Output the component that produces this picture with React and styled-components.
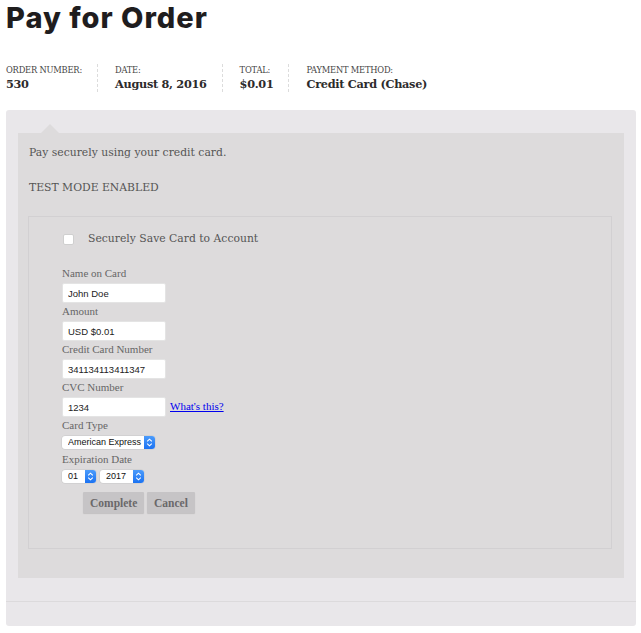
import styled, { createGlobalStyle } from 'styled-components'

const Global = createGlobalStyle`
  html, body {
    margin: 0;
    padding: 0;
    background: #ffffff;
  }
  * { box-sizing: border-box; }
`;

const Page = styled.div`
  padding: 0 5px 7px 6px;
  font-family: "DejaVu Serif", "Liberation Serif", serif;
  color: #555;
`;

const Title = styled.h1`
  margin: 0;
  padding-top: 1px;
  font-family: Inter, "Open Sans", sans-serif;
  font-weight: 800;
  font-size: 29px;
  line-height: 34px;
  letter-spacing: 1px;
  color: #1f1d1e;
`;

const Details = styled.ul`
  list-style: none;
  margin: 29px 0 0;
  padding: 0;
  display: flex;
`;

const Detail = styled.li`
  padding-right: 15px;
  margin-right: 17px;
  border-right: 1px dashed ${p => (p.last ? 'transparent' : '#dcdcdc')};
  display: flex;
  flex-direction: column;
`;

const DetailLabel = styled.span`
  font-size: 8.3px;
  line-height: 12px;
  letter-spacing: -0.2px;
  text-transform: uppercase;
  color: #444;
`;

const DetailValue = styled.strong`
  font-size: 11.3px;
  line-height: 16px;
  letter-spacing: -0.3px;
  font-weight: 700;
  color: #2d2b2c;
`;

const Checkout = styled.div`
  margin-top: 18px;
  background: #e9e7ea;
  border-radius: 3px;
  padding: 23px 12px 0;
`;

const PaymentBox = styled.div`
  position: relative;
  background: #dddbdc;
  padding: 11px 12px 29px 10px;

  &::before {
    content: '';
    position: absolute;
    top: -9px;
    left: 23px;
    border-left: 9px solid transparent;
    border-right: 9px solid transparent;
    border-bottom: 9px solid #dddbdc;
  }
`;

const Note = styled.p`
  margin: ${p => (p.first ? '0' : '17px')} 0 0 1px;
  font-size: 10.8px;
  line-height: 18px;
  color: #555;
`;

const Fieldset = styled.fieldset`
  margin: 19px 0 0;
  border: 1px solid #d2d0d2;
  padding: 14px 0 35px 33px;
  min-width: 0;
`;

const SaveRow = styled.label`
  display: flex;
  align-items: center;
  gap: 14px;
  font-size: 10.8px;
  line-height: 16px;
  color: #555;
`;

const Check = styled.input`
  appearance: none;
  margin: 0 0 0 1px;
  width: 11px;
  height: 11px;
  background: #fff;
  border: 1px solid #cfcfcf;
  border-radius: 2px;
`;

const Form = styled.div`
  margin-top: 18px;
  display: flex;
  flex-direction: column;
  align-items: flex-start;
  font-family: "Liberation Serif", "Times New Roman", serif;
`;

const Label = styled.label`
  font-size: 11px;
  line-height: 16px;
  color: #666;
  margin-top: ${p => p.gap || 0}px;
`;

const FieldRow = styled.div`
  margin-top: 2px;
  display: flex;
  align-items: center;
  gap: 4px;
`;

const Input = styled.input`
  width: 104px;
  height: 20px;
  margin: 0;
  border: 1px solid #e4e4e4;
  border-radius: 2px;
  background: #fff;
  padding: 0 5px;
  font-family: "Liberation Sans", Arial, sans-serif;
  font-size: 9.5px;
  color: #222;
  outline: none;
`;

const Help = styled.a`
  font-size: 11px;
  color: #0000ee;
  text-decoration: underline;
  margin-top: -2px;
`;

const SelectRow = styled.div`
  margin-top: ${p => p.gap || 3}px;
  display: flex;
  gap: 4px;
`;

const SelectWrap = styled.div`
  width: ${p => p.w}px;
  height: 13px;
  display: flex;
  background: #fff;
  border-radius: 3px;
  box-shadow: 0 0 0 0.5px #c8c8c8;
  overflow: hidden;
`;

const Select = styled.select`
  appearance: none;
  flex: 1;
  min-width: 0;
  border: none;
  background: transparent;
  padding: 0 0 0 6px;
  margin: 0;
  font-family: "Liberation Sans", Arial, sans-serif;
  font-size: 9px;
  line-height: 13px;
  color: #111;
  outline: none;
`;

const Arrow = styled.span`
  width: 11px;
  display: flex;
  align-items: center;
  justify-content: center;
  background: linear-gradient(#4b9bfb, #1b72f2);
`;

const Buttons = styled.div`
  margin: 9px 0 0 21px;
  display: flex;
  gap: 3px;
`;

const Button = styled.button`
  height: 21px;
  padding: 0 7px;
  border: none;
  border-radius: 1px;
  background: #c6c4c6;
  box-shadow: 0 1px 1px rgba(0, 0, 0, 0.12);
  font-family: "Liberation Serif", "Times New Roman", serif;
  font-weight: 700;
  font-size: 11.5px;
  color: #6a686a;
  width: ${p => p.w}px;
`;

const PlaceOrder = styled.div`
  margin: 23px -12px 0;
  height: 25px;
  border-top: 1px solid #dcdadc;
`;

const UpDown = () => (
  <svg width="7" height="9" viewBox="0 0 7 9" fill="none" stroke="#fff" strokeWidth="1.1">
    <path d="M1.2 3.4 L3.5 1.2 L5.8 3.4" />
    <path d="M1.2 5.6 L3.5 7.8 L5.8 5.6" />
  </svg>
);

const Dropdown = ({ w, value, options }) => (
  <SelectWrap w={w}>
    <Select defaultValue={value}>
      {options.map(o => <option key={o}>{o}</option>)}
    </Select>
    <Arrow><UpDown /></Arrow>
  </SelectWrap>
);

const details = [
  ['Order number:', '530'],
  ['Date:', 'August 8, 2016'],
  ['Total:', '$0.01'],
  ['Payment method:', 'Credit Card (Chase)'],
];

export default function App() {
  return (
    <Page>
      <Global />
      <Title>Pay for Order</Title>

      <Details>
        {details.map(([label, value], i) => (
          <Detail key={label} last={i === details.length - 1}>
            <DetailLabel>{label}</DetailLabel>
            <DetailValue>{value}</DetailValue>
          </Detail>
        ))}
      </Details>

      <Checkout>
        <PaymentBox>
          <Note first>Pay securely using your credit card.</Note>
          <Note>TEST MODE ENABLED</Note>

          <Fieldset>
            <SaveRow>
              <Check type="checkbox" />
              Securely Save Card to Account
            </SaveRow>

            <Form>
              <Label>Name on Card</Label>
              <FieldRow><Input defaultValue="John Doe" /></FieldRow>
              <Label>Amount</Label>
              <FieldRow><Input defaultValue="USD $0.01" /></FieldRow>
              <Label>Credit Card Number</Label>
              <FieldRow><Input defaultValue="341134113411347" /></FieldRow>
              <Label>CVC Number</Label>
              <FieldRow>
                <Input defaultValue="1234" />
                <Help href="#">What's this?</Help>
              </FieldRow>
              <Label>Card Type</Label>
              <SelectRow>
                <Dropdown w={93} value="American Express" options={['Visa', 'MasterCard', 'American Express', 'Discover']} />
              </SelectRow>
              <Label gap={2}>Expiration Date</Label>
              <SelectRow>
                <Dropdown w={34} value="01" options={['01', '02', '03', '04', '05', '06', '07', '08', '09', '10', '11', '12']} />
                <Dropdown w={44} value="2017" options={['2016', '2017', '2018', '2019', '2020']} />
              </SelectRow>
              <Buttons>
                <Button w={61}>Complete</Button>
                <Button w={48}>Cancel</Button>
              </Buttons>
            </Form>
          </Fieldset>
        </PaymentBox>
        <PlaceOrder />
      </Checkout>
    </Page>
  );
}
